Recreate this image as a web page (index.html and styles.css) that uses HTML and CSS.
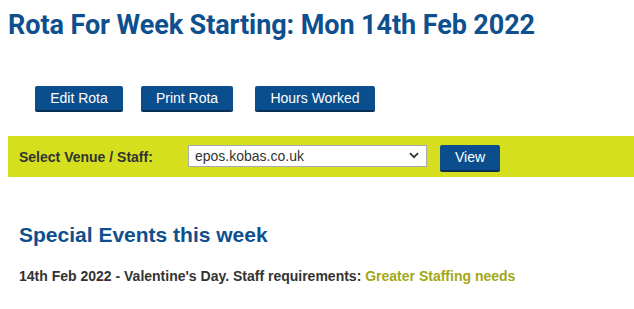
FILE: index.html
```html
<!DOCTYPE html>
<html>
<head>
<meta charset="utf-8">
<link rel="stylesheet" href="styles.css">
</head>
<body>
<h1 class="title">Rota For Week Starting: Mon 14th Feb 2022</h1>
<div class="actions">
  <button class="btn btn-edit">Edit Rota</button>
  <button class="btn btn-print">Print Rota</button>
  <button class="btn btn-hours">Hours Worked</button>
</div>
<div class="filter">
  <label class="filter-label">Select Venue / Staff:</label>
  <div class="select">
    <span class="select-text">epos.kobas.co.uk</span>
    <svg class="chev" width="10" height="7" viewBox="0 0 10 7"><path d="M1 1.2 L5 5.2 L9 1.2" fill="none" stroke="#333" stroke-width="1.8"/></svg>
  </div>
  <button class="btn btn-view">View</button>
</div>
<div class="events">
  <h2 class="events-title">Special Events this week</h2>
  <p class="event-line">14th Feb 2022 - Valentine's Day. Staff requirements: <span class="need">Greater Staffing needs</span></p>
</div>
</body>
</html>
```
FILE: styles.css
```css
body {
  margin: 8px 0 0 8px;
  font-family: "Liberation Sans", Arial, sans-serif;
  background: #fff;
}
.title {
  margin: 0;
  padding-top: 2px;
  font-family: "Roboto", sans-serif;
  font-weight: 700;
  font-size: 27px;
  line-height: 30px;
  color: #0e4f8e;
  letter-spacing: -0.08px;
}
.actions {
  display: flex;
  margin-top: 46px;
  padding-left: 27px;
}
.btn {
  font-family: "Liberation Sans", Arial, sans-serif;
  font-size: 14px;
  color: #fff;
  background: #0b4e8e;
  border: none;
  border-bottom: 2px solid #0a2f55;
  border-radius: 2px;
  height: 26px;
  padding: 0;
  cursor: pointer;
}
.btn-edit { width: 88px; }
.btn-print { width: 92px; margin-left: 18px; }
.btn-hours { width: 120px; margin-left: 22px; }
.filter {
  display: flex;
  align-items: center;
  margin-top: 24px;
  height: 41px;
  background: #d5df1e;
  padding-left: 11px;
}
.filter-label {
  font-size: 14px;
  font-weight: 700;
  color: #333;
  width: 169px;
}
.select {
  display: flex;
  align-items: center;
  justify-content: space-between;
  box-sizing: border-box;
  width: 239px;
  height: 22px;
  background: #fff;
  border: 1px solid #a9a9a9;
  padding: 0 7px 0 6px;
  margin-bottom: 2px;
}
.select-text {
  font-size: 14px;
  color: #333;
}
.btn-view {
  width: 60px;
  height: 27px;
  margin-left: 13px;
  margin-top: 3px;
}
.events {
  padding-left: 11px;
}
.events-title {
  margin: 46px 0 0;
  font-size: 21px;
  line-height: 24px;
  font-weight: 700;
  color: #0e4f8e;
}
.event-line {
  margin: 21px 0 0;
  font-size: 14px;
  line-height: 16px;
  font-weight: 700;
  color: #333;
}
.need {
  color: #a3a817;
}
```
